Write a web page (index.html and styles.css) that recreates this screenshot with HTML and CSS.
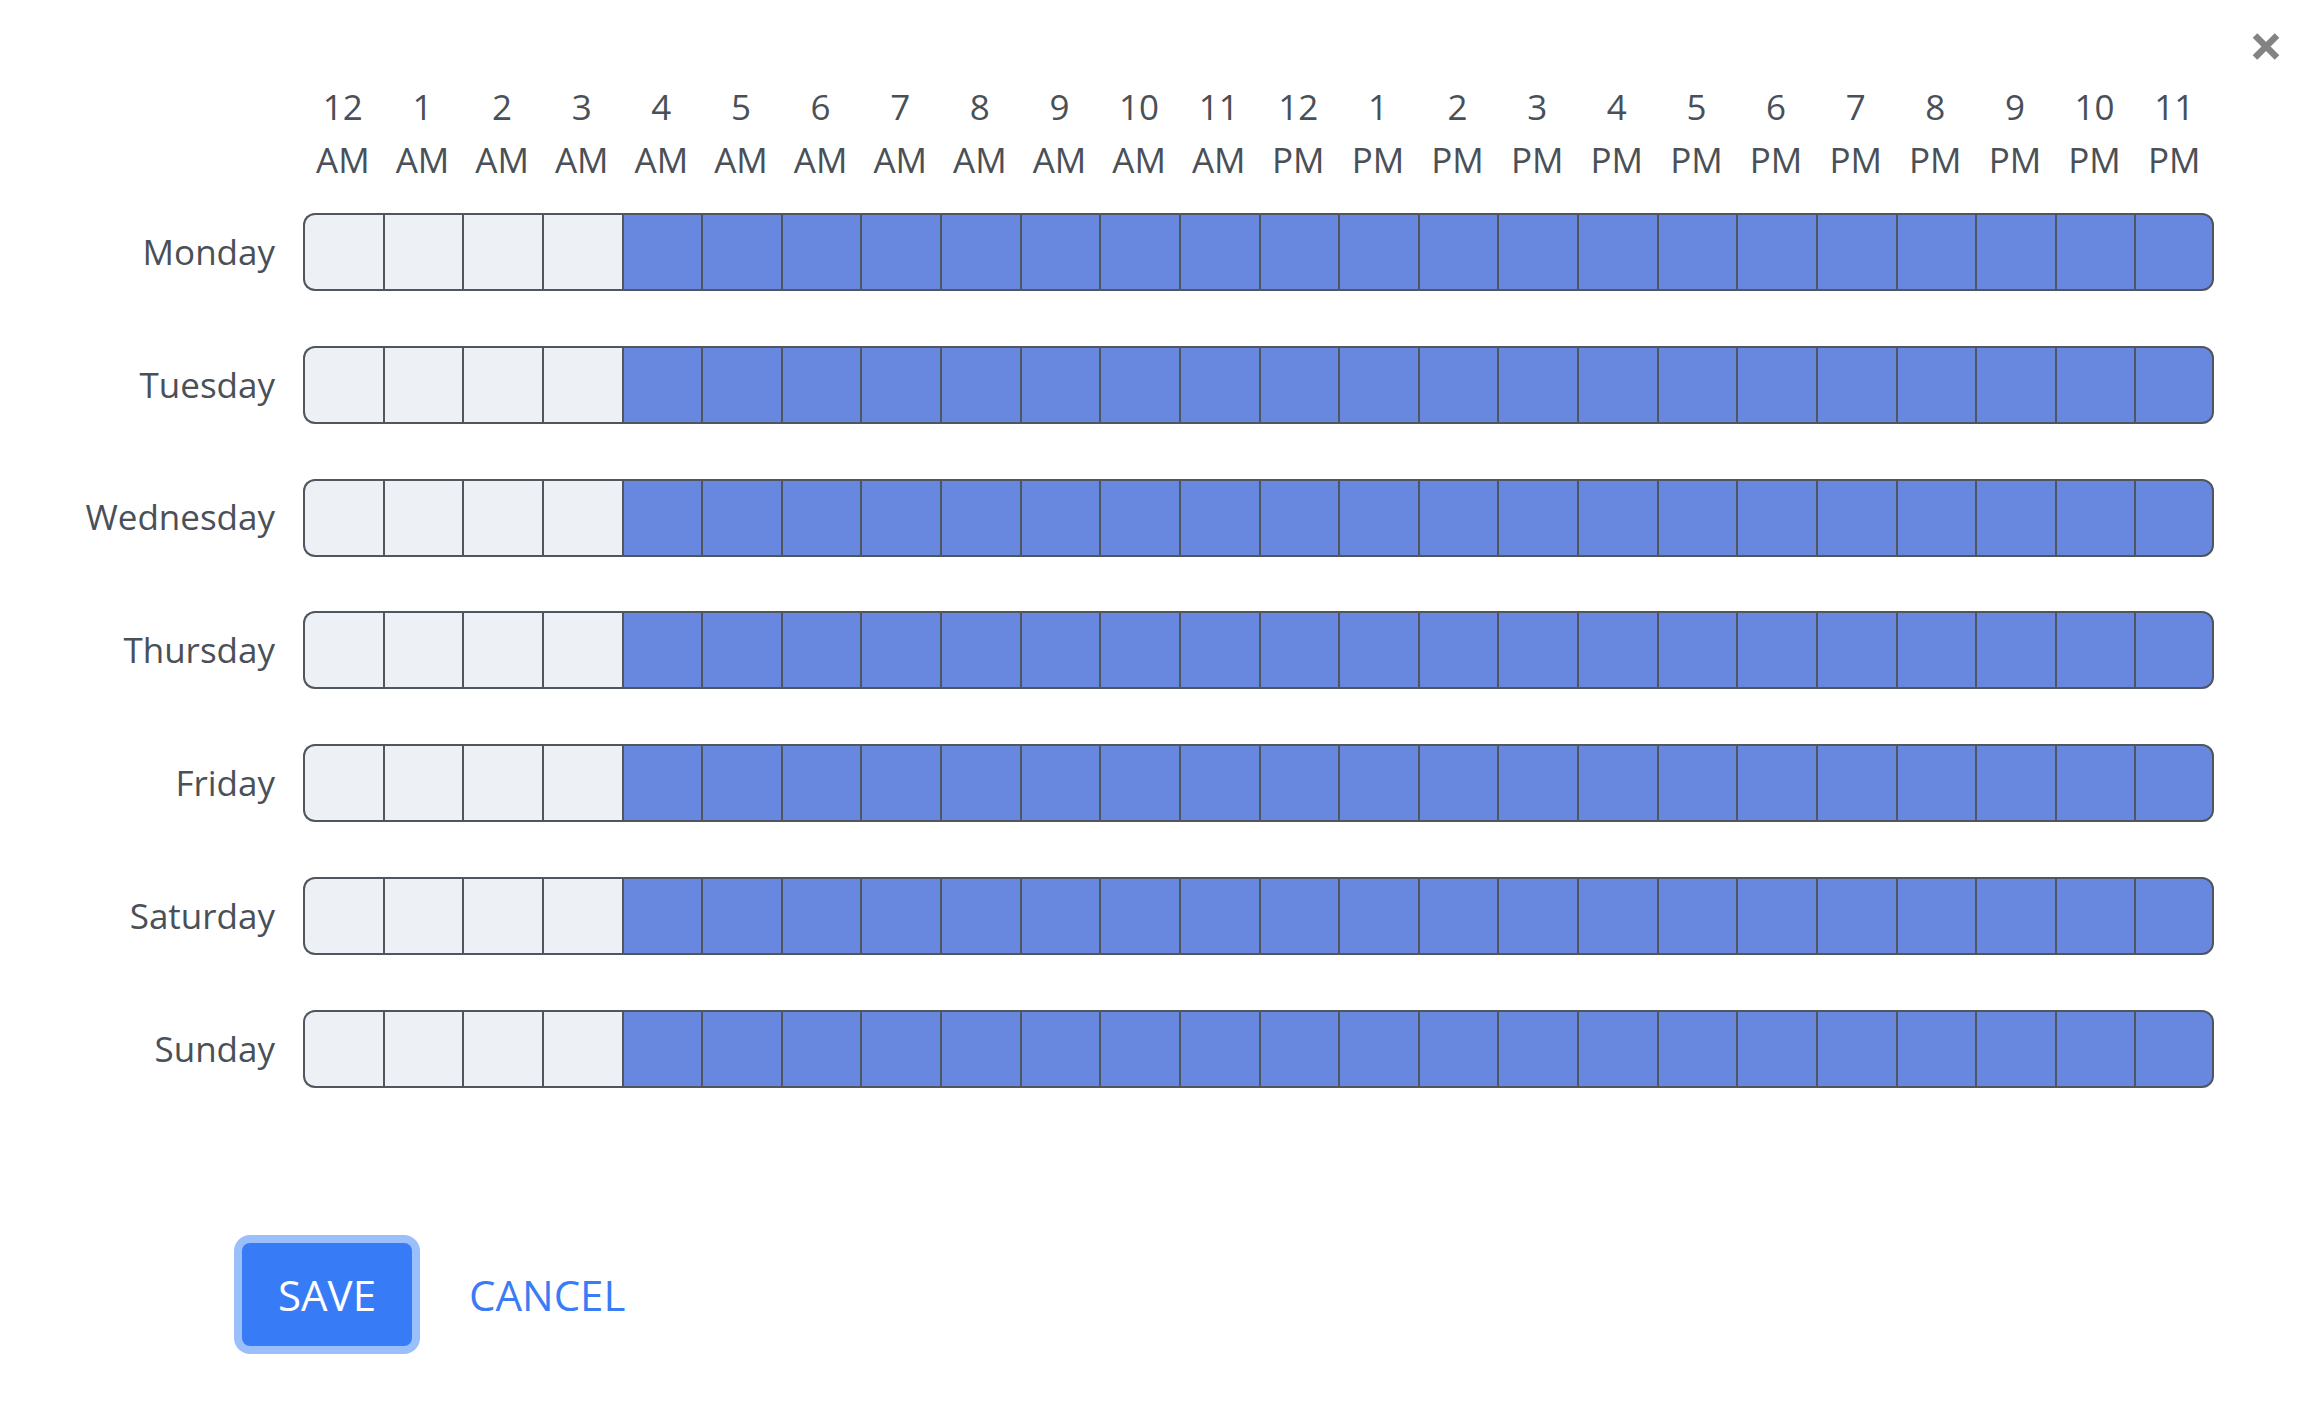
FILE: index.html
```html
<!DOCTYPE html>
<html lang="en">
<head>
<meta charset="utf-8">
<title>Schedule</title>
<link rel="stylesheet" href="styles.css">
</head>
<body>
<div class="modal">
  <button class="close" aria-label="Close">
    <svg width="28" height="29" viewBox="0 0 28 29"><path d="M3 3.5 L25 25.5 M25 3.5 L3 25.5" stroke="#838383" stroke-width="6.5" fill="none"/></svg>
  </button>

  <div class="header">
    <div class="spacer"></div>
    <div class="hours">
      <div class="hour">12<br>AM</div><div class="hour">1<br>AM</div><div class="hour">2<br>AM</div><div class="hour">3<br>AM</div>
      <div class="hour">4<br>AM</div><div class="hour">5<br>AM</div><div class="hour">6<br>AM</div><div class="hour">7<br>AM</div>
      <div class="hour">8<br>AM</div><div class="hour">9<br>AM</div><div class="hour">10<br>AM</div><div class="hour">11<br>AM</div>
      <div class="hour">12<br>PM</div><div class="hour">1<br>PM</div><div class="hour">2<br>PM</div><div class="hour">3<br>PM</div>
      <div class="hour">4<br>PM</div><div class="hour">5<br>PM</div><div class="hour">6<br>PM</div><div class="hour">7<br>PM</div>
      <div class="hour">8<br>PM</div><div class="hour">9<br>PM</div><div class="hour">10<br>PM</div><div class="hour">11<br>PM</div>
    </div>
  </div>

  <div class="days" id="days"></div>

  <div class="actions">
    <button class="btn-save">SAVE</button>
    <button class="btn-cancel">CANCEL</button>
  </div>
</div>
<script src="app.js"></script>
</body>
</html>
```

FILE: app.js
```js
(function () {
  var days = ["Monday", "Tuesday", "Wednesday", "Thursday", "Friday", "Saturday", "Sunday"];
  var wrap = document.getElementById("days");
  days.forEach(function (d) {
    var row = document.createElement("div");
    row.className = "day";
    var label = document.createElement("div");
    label.className = "day-label";
    label.textContent = d;
    row.appendChild(label);
    var slots = document.createElement("div");
    slots.className = "slots";
    for (var h = 0; h < 24; h++) {
      var c = document.createElement("div");
      c.className = "slot" + (h >= 4 ? " on" : "");
      slots.appendChild(c);
    }
    row.appendChild(slots);
    wrap.appendChild(row);
  });
})();
```

FILE: styles.css
```css
html, body {
  margin: 0;
  padding: 0;
  background: #ffffff;
}

body {
  font-family: "Open Sans", "Liberation Sans", sans-serif;
  color: #495057;
}

.modal {
  position: relative;
  width: 2322px;
  height: 1416px;
  padding-top: 81px;
  box-sizing: border-box;
}

.close {
  position: absolute;
  top: 32px;
  right: 42px;
  width: 28px;
  height: 29px;
  padding: 0;
  border: 0;
  background: transparent;
  display: flex;
}

.header {
  display: flex;
}

.spacer {
  width: 303px;
  flex: none;
}

.hours {
  width: 1911px;
  display: grid;
  grid-template-columns: repeat(24, 1fr);
}

.hour {
  text-align: center;
  font-size: 35px;
  line-height: 52.5px;
}

.days {
  margin-top: 27px;
  display: flex;
  flex-direction: column;
  gap: 54.8px;
}

.day {
  display: flex;
  align-items: center;
}

.day-label {
  width: 275px;
  margin-right: 28px;
  flex: none;
  text-align: right;
  font-size: 35px;
  line-height: 52.5px;
}

.slots {
  width: 1911px;
  height: 78px;
  display: grid;
  grid-template-columns: repeat(24, 1fr);
}

.slot {
  box-sizing: border-box;
  background: #edf0f4;
  border-top: 2px solid #50565f;
  border-bottom: 2px solid #50565f;
  border-left: 2px solid #50565f;
}

.slot:first-child {
  border-radius: 12px 0 0 12px;
}

.slot:last-child {
  border-right: 2px solid #50565f;
  border-radius: 0 12px 12px 0;
}

.slot.on {
  background: #6887df;
}

.actions {
  margin-top: 155px;
  padding-left: 242px;
  display: flex;
  align-items: center;
}

.btn-save {
  width: 170px;
  height: 103px;
  border: 0;
  border-radius: 8px;
  background: #377cf6;
  box-shadow: 0 0 0 8px #9bbffa;
  color: #ffffff;
  font-family: "Open Sans", "Liberation Sans", sans-serif;
  font-size: 42px;
  line-height: 63px;
  padding: 0;
}

.btn-cancel {
  margin-left: 57px;
  padding: 0;
  border: 0;
  background: transparent;
  color: #3a7cf5;
  font-family: "Open Sans", "Liberation Sans", sans-serif;
  font-size: 42px;
  line-height: 63px;
}
```
